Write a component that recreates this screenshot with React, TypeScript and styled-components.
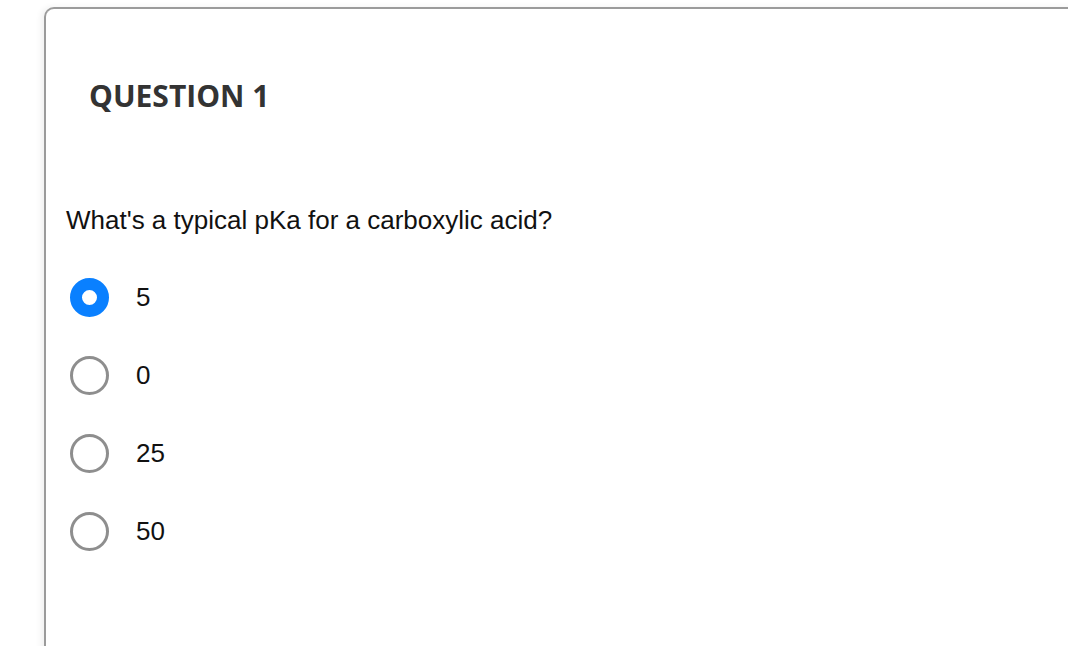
import React, { useState } from "react";
import styled, { createGlobalStyle } from "styled-components";

const Global = createGlobalStyle`
  html, body { margin: 0; padding: 0; background: #ffffff; }
`;

const Page = styled.div`
  height: 646px;
  overflow: hidden;
  padding: 7px 0 0 44px;
  box-sizing: border-box;
`;

const Card = styled.section`
  width: calc(100% + 40px);
  height: 680px;
  box-sizing: border-box;
  border: 2px solid #9b9b9b;
  border-right: none;
  border-bottom: none;
  border-radius: 10px 0 0 0;
  box-shadow: -3px 0 6px rgba(0, 0, 0, 0.06);
  background: #ffffff;
  padding: 67px 0 0 20px;
  display: flex;
  flex-direction: column;
`;

const Heading = styled.h2`
  margin: 0 0 0 23px;
  font-family: "Open Sans", "Noto Sans", sans-serif;
  font-weight: 700;
  font-size: 30px;
  line-height: 40px;
  color: #333333;
`;

const Prompt = styled.p`
  margin: 89px 0 0 0;
  font-family: "Liberation Sans", Arial, sans-serif;
  font-size: 26px;
  line-height: 30px;
  color: #111111;
`;

const Options = styled.div`
  margin-top: 23px;
  display: flex;
  flex-direction: column;
`;

const Option = styled.label`
  height: 78px;
  display: flex;
  align-items: center;
  gap: 27px;
  padding-left: 4px;
  cursor: pointer;
`;

const Radio = styled.input`
  appearance: none;
  -webkit-appearance: none;
  margin: 0;
  width: 39px;
  height: 39px;
  box-sizing: border-box;
  border-radius: 50%;
  border: 3px solid #8e8e8e;
  background: #ffffff;
  flex: none;

  &:checked {
    border: 12px solid #0a80ff;
    background: #ffffff;
  }
`;

const OptionText = styled.span`
  font-family: "Liberation Sans", Arial, sans-serif;
  font-size: 26px;
  line-height: 30px;
  color: #111111;
`;

const answers = ["5", "0", "25", "50"];

export default function App() {
  const [picked, setPicked] = useState("5");
  return (
    <>
      <Global />
      <Page>
        <Card>
          <Heading>QUESTION 1</Heading>
          <Prompt>What's a typical pKa for a carboxylic acid?</Prompt>
          <Options>
            {answers.map((a) => (
              <Option key={a}>
                <Radio
                  type="radio"
                  name="q1"
                  value={a}
                  checked={picked === a}
                  onChange={() => setPicked(a)}
                />
                <OptionText>{a}</OptionText>
              </Option>
            ))}
          </Options>
        </Card>
      </Page>
    </>
  );
}
